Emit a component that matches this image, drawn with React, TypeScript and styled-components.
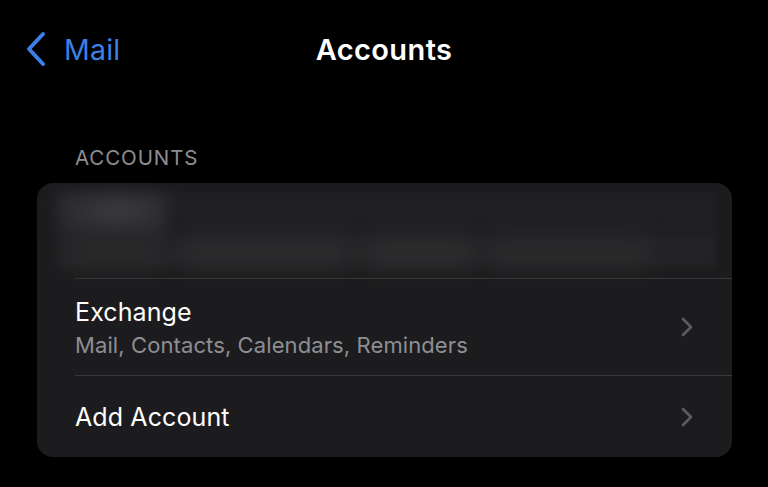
import React from "react";
import styled, { createGlobalStyle } from "styled-components";

const GlobalStyle = createGlobalStyle`
  html, body {
    margin: 0;
    padding: 0;
    background: #000;
  }
  body {
    font-family: Inter, "Noto Sans", sans-serif;
    -webkit-font-smoothing: antialiased;
  }
`;

const Page = styled.div`
  width: 768px;
  height: 487px;
  background: #000;
  overflow: hidden;
`;

const NavBar = styled.div`
  position: relative;
  height: 97px;
  display: flex;
  align-items: center;
  justify-content: center;
`;

const BackButton = styled.div`
  position: absolute;
  left: 25px;
  top: 31px;
  display: flex;
  align-items: center;
  gap: 17px;
  color: #3b80e6;
  font-size: 28.5px;
  letter-spacing: 0.2px;
`;

const Title = styled.div`
  color: #fff;
  font-size: 29px;
  font-weight: 600;
  margin-top: 1px;
  letter-spacing: 0.4px;
`;

const Section = styled.div`
  padding: 0 36px 0 37px;
`;

const SectionHeader = styled.div`
  color: #8d8d92;
  font-size: 20.5px;
  padding: 48px 0 13px 38px;
  letter-spacing: 0.9px;
`;

const Card = styled.div`
  background: #1c1c1e;
  border-radius: 16px;
  overflow: hidden;
`;

const Row = styled.div<{ $height: number; $divider?: boolean }>`
  height: ${(p) => p.$height}px;
  display: flex;
  align-items: center;
  margin-left: 38px;
  padding-right: 38px;
  border-top: ${(p) => (p.$divider ? "1px solid #38383a" : "none")};
`;

const RowText = styled.div`
  flex: 1;
  display: flex;
  flex-direction: column;
  gap: 5px;
`;

const RowTitle = styled.div`
  color: #fff;
  font-size: 25px;
  letter-spacing: 0.1px;
`;

const RowSub = styled.div`
  color: #8e8e93;
  font-size: 22px;
  letter-spacing: 0.1px;
`;

const BlurRow = styled.div`
  height: 95px;
  padding: 9px 16px 10px 20px;
  box-sizing: border-box;
`;

const BlurArea = styled.div`
  height: 100%;
  background: #201f22;
  display: flex;
  flex-direction: column;
  filter: blur(3px);
`;

const BlurTop = styled.div`
  flex: 1;
  display: flex;
`;

const BlurAvatar = styled.div`
  width: 110px;
  height: 100%;
  background: radial-gradient(ellipse at 55% 40%, #3c3c3f 0%, #2f2f32 50%, #242426 100%);
  filter: blur(7px);
`;

const BlurBottom = styled.div`
  height: 30px;
  display: flex;
  gap: 14px;
  padding: 0 60px 0 10px;
  background: #232325;
`;

const BlurLine = styled.div<{ $w: number; $c: string }>`
  width: ${(p) => p.$w}px;
  height: 100%;
  background: ${(p) => p.$c};
  filter: blur(10px);
`;

const Chevron = () => (
  <svg width="14" height="20" viewBox="0 0 14 20" fill="none">
    <path d="M3 2 L11 10 L3 18" stroke="#5c5c60" strokeWidth="2.6" strokeLinecap="round" strokeLinejoin="round" />
  </svg>
);

const BackChevron = () => (
  <svg width="22" height="36" viewBox="0 0 22 36" fill="none">
    <path d="M18 3 L4 18 L18 33" stroke="#3b80e6" strokeWidth="4" strokeLinecap="round" strokeLinejoin="round" />
  </svg>
);

export default function App() {
  return (
    <Page>
      <GlobalStyle />
      <NavBar>
        <BackButton>
          <BackChevron />
          <span>Mail</span>
        </BackButton>
        <Title>Accounts</Title>
      </NavBar>
      <Section>
        <SectionHeader>ACCOUNTS</SectionHeader>
        <Card>
          <BlurRow>
            <BlurArea>
              <BlurTop>
                <BlurAvatar />
              </BlurTop>
              <BlurBottom>
                <BlurLine $w={100} $c="#29292b" />
                <BlurLine $w={170} $c="#2b2b2d" />
                <BlurLine $w={110} $c="#2c2c2e" />
                <BlurLine $w={160} $c="#2a2a2c" />
              </BlurBottom>
            </BlurArea>
          </BlurRow>
          <Row $height={96} $divider>
            <RowText>
              <RowTitle>Exchange</RowTitle>
              <RowSub>Mail, Contacts, Calendars, Reminders</RowSub>
            </RowText>
            <Chevron />
          </Row>
          <Row $height={81} $divider>
            <RowText>
              <RowTitle>Add Account</RowTitle>
            </RowText>
            <Chevron />
          </Row>
        </Card>
      </Section>
    </Page>
  );
}
